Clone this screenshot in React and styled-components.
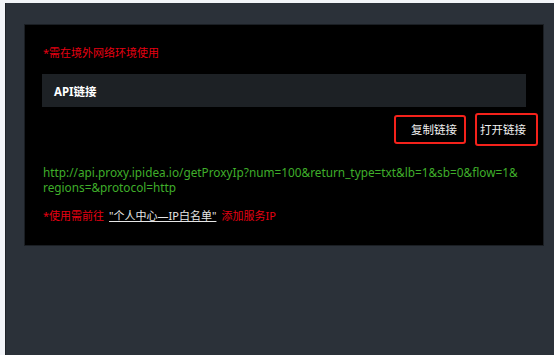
import React from 'react'
import styled, { createGlobalStyle } from 'styled-components'

const GlobalStyle = createGlobalStyle`
  html, body {
    margin: 0;
    padding: 0;
    background: #f2f4f8;
    overflow: hidden;
  }
  body {
    font-family: "Noto Sans", "Noto Sans CJK SC", sans-serif;
  }
`;

const Frame = styled.div`
  margin: 3px 0 0 5px;
  height: 352px;
  background-color: #2b3139;
  border-left: 1px solid #1e2228;
  padding: 21px 10px 0 18px;
  box-sizing: border-box;
`;

const Panel = styled.div`
  background-color: #000;
  border: 1px solid #1a1e23;
  padding: 20px 17px 21px 17px;
  display: flex;
  flex-direction: column;
`;

const Notice = styled.div`
  color: ${p => p.color || '#e60012'};
  font-size: 11px;
  line-height: 16px;
  padding-left: 1px;
`;

const LinkBar = styled.div`
  margin-top: 13px;
  height: 33px;
  background-color: #1d2125;
  display: flex;
  align-items: center;
  padding-left: 12px;
  color: #fff;
  font-size: 11.5px;
  font-weight: 700;
`;

const Actions = styled.div`
  margin-top: 6px;
  margin-right: -12px;
  height: 33px;
  display: flex;
  align-items: center;
  justify-content: flex-end;
  gap: 9px;
`;

const ActionButton = styled.button`
  background: transparent;
  border: 2px solid #f5221b;
  border-radius: 3px;
  color: #f0f0f0;
  font-family: inherit;
  font-size: 11.5px;
  line-height: 16px;
  height: ${p => p.$h}px;
  padding: 0 ${p => p.$pr}px 0 ${p => p.$pl}px;
  box-sizing: border-box;
  cursor: pointer;
`;

const Url = styled.div`
  margin-top: 19px;
  color: #3fae2a;
  font-size: 11.8px;
  line-height: 15px;
  padding-left: 1px;
`;

const Hint = styled(Notice)`
  margin-top: 13px;
`;

const WhiteLink = styled.a`
  color: #e6e6e6;
  text-decoration: underline;
  margin: 0 5px;
  cursor: pointer;
`;

export default function App() {
  return (
    <>
      <GlobalStyle />
      <Frame>
        <Panel>
          <Notice>*需在境外网络环境使用</Notice>
          <LinkBar>API链接</LinkBar>
          <Actions>
            <ActionButton $h={29} $pl={15} $pr={7}>复制链接</ActionButton>
            <ActionButton $h={33} $pl={3} $pr={10}>打开链接</ActionButton>
          </Actions>
          <Url>
            http://api.proxy.ipidea.io/getProxyIp?num=100&amp;return_type=txt&amp;lb=1&amp;sb=0&amp;flow=1&amp;<wbr />regions=&amp;protocol=http
          </Url>
          <Hint>
            *使用需前往<WhiteLink>"个人中心—IP白名单"</WhiteLink>添加服务IP
          </Hint>
        </Panel>
      </Frame>
    </>
  )
}
